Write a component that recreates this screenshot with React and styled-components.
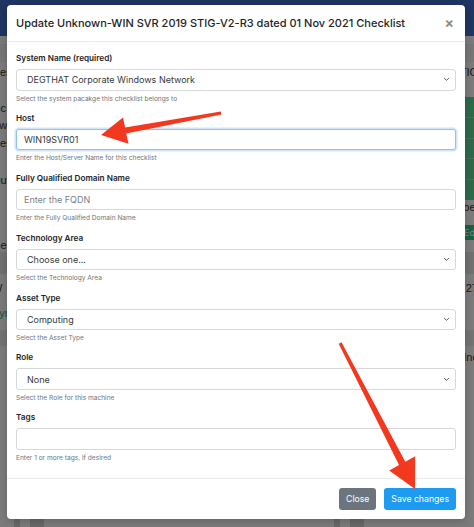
import React from "react";
import styled, { createGlobalStyle } from "styled-components";

const GlobalStyle = createGlobalStyle`
    html, body {
        margin: 0;
        padding: 0;
        width: 474px;
        height: 527px;
        overflow: hidden;
    }
    body {
        font-family: Inter, "Liberation Sans", sans-serif;
        color: #212529;
    }
`;

const fields = [
    {
        label: "System Name (required)",
        kind: "select",
        value: "DEGTHAT Corporate Windows Network",
        help: "Select the system pacakge this checklist belongs to",
    },
    {
        label: "Host",
        kind: "input",
        value: "WIN19SVR01",
        help: "Enter the Host/Server Name for this checklist",
        focused: true,
    },
    {
        label: "Fully Qualified Domain Name",
        kind: "input",
        placeholder: "Enter the FQDN",
        help: "Enter the Fully Qualified Domain Name",
    },
    {
        label: "Technology Area",
        kind: "select",
        value: "Choose one...",
        help: "Select the Technology Area",
    },
    {
        label: "Asset Type",
        kind: "select",
        value: "Computing",
        help: "Select the Asset Type",
    },
    {
        label: "Role",
        kind: "select",
        value: "None",
        help: "Select the Role for this machine",
    },
    {
        label: "Tags",
        kind: "input",
        value: "",
        help: "Enter 1 or more tags, if desired",
    },
];

// page rows sitting behind the backdrop, only slivers show at the edges
const pageRows = [
    { top: 64, left: "Desa", right: "STIG" },
    { top: 100, left: "Lic C", right: "" },
    { top: 117, left: "Sw", right: "" },
    { top: 135, left: "Desa", right: "" },
    { top: 172, left: "Outh", right: "" },
    { top: 199, left: "", right: "Label" },
    { top: 237, left: "Geo", right: "" },
    { top: 280, left: "W", right: "27" },
    { top: 305, left: "Sync", right: "", link: true },
    { top: 349, left: "", right: "Inc" },
];

export default function App() {
    return (
        <>
            <GlobalStyle />
            <Page>
                <Navbar />
                <Band $top={44} $h={18} $shade='#ededed' />
                <Band $top={252} $h={22} $shade='#e2e2e2' />
                <Band $top={330} $h={16} $shade='#e6e6e6' />
                {pageRows.map((row) => (
                    <PageRow key={row.top} style={{ top: row.top }}>
                        <PageText $link={row.link}>{row.left}</PageText>
                        <PageText>{row.right}</PageText>
                    </PageRow>
                ))}
                <GreenTable>
                    <GreenRow />
                    <GreenRow />
                    <GreenRow />
                    <GreenRow />
                </GreenTable>
                <GreenButton>Edit</GreenButton>
                <Columns>
                    <Col $w={6} $ml={14} />
                    <Col $w={14} $ml={10} />
                    <Col $w={6} $ml={290} />
                    <Col $w={14} $ml={10} />
                </Columns>
            </Page>
            <Backdrop />
            <Modal>
                <Header>
                    <Title>
                        Update Unknown-WIN SVR 2019 STIG-V2-R3 dated 01 Nov
                        2021 Checklist
                    </Title>
                    <CloseX>×</CloseX>
                </Header>
                <Body>
                    {fields.map((f) => (
                        <Group key={f.label}>
                            <Label>{f.label}</Label>
                            {f.kind === "select" ? (
                                <SelectBox>
                                    <span>{f.value}</span>
                                    <Chevron />
                                </SelectBox>
                            ) : (
                                <InputBox $focused={f.focused}>
                                    {f.value ? (
                                        f.value
                                    ) : (
                                        <Placeholder>
                                            {f.placeholder}
                                        </Placeholder>
                                    )}
                                </InputBox>
                            )}
                            <Help>{f.help}</Help>
                        </Group>
                    ))}
                </Body>
                <Footer>
                    <Button $variant='secondary'>Close</Button>
                    <Button $variant='primary'>Save changes</Button>
                </Footer>
            </Modal>
            <Arrows />
        </>
    );
}

function Chevron() {
    return (
        <svg width='7' height='5' viewBox='0 0 7 5'>
            <path
                d='M1.4 1.3 L3.5 3.4 L5.6 1.3'
                fill='none'
                stroke='#555'
                strokeWidth='1'
                strokeLinecap='round'
                strokeLinejoin='round'
            />
        </svg>
    );
}

function Arrows() {
    return (
        <ArrowLayer viewBox='0 0 474 527'>
            <polygon
                fill='#f2391f'
                points='101,135 128.5,143.8 126.2,133.6 221.4,114.6 220.8,111.4 125.1,127.4 123,117.4'
            />
            <polygon
                fill='#f2391f'
                points='415,489 389.2,470.4 399,465 338.7,343.7 341.5,342.3 405.3,461.8 415.2,456.3'
            />
        </ArrowLayer>
    );
}

const Page = styled.div`
    position: absolute;
    inset: 0;
    background: #f6f6f6;
    overflow: hidden;
`;

const Navbar = styled.div`
    height: 36px;
    background: #3f6bc4;
`;

const PageRow = styled.div`
    position: absolute;
    left: 0;
    right: 0;
    display: flex;
    justify-content: space-between;
    align-items: center;
    height: 16px;
    font-family: "Liberation Sans", sans-serif;
    font-size: 11px;
`;

const PageText = styled.span`
    color: ${(p) => (p.$link ? "#2fa86a" : "#333")};
    margin-left: -8px;
    margin-right: -4px;
`;

const GreenTable = styled.div`
    position: absolute;
    right: 0;
    top: 97px;
    width: 12px;
    height: 103px;
    background: #58d496;
    display: flex;
    flex-direction: column;
    justify-content: space-evenly;
`;

const GreenRow = styled.div`
    height: 1px;
    background: #86e4b5;
`;

const GreenButton = styled.div`
    position: absolute;
    right: 0;
    top: 225px;
    width: 10px;
    height: 15px;
    background: #3bbf86;
    color: #fff;
    font-size: 9px;
    line-height: 15px;
    padding-left: 3px;
`;

const Band = styled.div`
    position: absolute;
    left: 0;
    right: 0;
    top: ${(p) => p.$top}px;
    height: ${(p) => p.$h}px;
    background: ${(p) => p.$shade};
`;

const Columns = styled.div`
    position: absolute;
    left: 0;
    right: 0;
    bottom: 0;
    height: 12px;
    display: flex;
`;

const Col = styled.div`
    width: ${(p) => p.$w}px;
    margin-left: ${(p) => p.$ml}px;
    background: #d0d0d0;
`;

const Backdrop = styled.div`
    position: absolute;
    inset: 0;
    background: rgba(0, 0, 0, 0.5);
`;

const Modal = styled.div`
    position: absolute;
    left: 7px;
    top: 5px;
    width: 458px;
    height: 514px;
    background: #fff;
    border-radius: 4px;
    display: flex;
    flex-direction: column;
    box-shadow: 0 2px 8px rgba(0, 0, 0, 0.2);
`;

const Header = styled.div`
    height: 36px;
    display: flex;
    align-items: center;
    justify-content: space-between;
    padding: 0 11px 0 9px;
    border-bottom: 1px solid #e9ecef;
`;

const Title = styled.h5`
    margin: 0;
    font-size: 11px;
    font-weight: 500;
    color: #212529;
    white-space: nowrap;
`;

const CloseX = styled.span`
    font-size: 14px;
    font-weight: 700;
    color: #000;
    opacity: 0.45;
    line-height: 1;
`;

const Body = styled.div`
    flex: 1;
    padding: 9px 9px 0;
`;

const Group = styled.div`
    margin-bottom: 7.4px;
`;

const Label = styled.label`
    display: block;
    height: 14px;
    line-height: 14px;
    margin-bottom: 4px;
    font-size: 8.2px;
    font-weight: 600;
    color: #212529;
`;

const controlBase = `
    box-sizing: border-box;
    height: 21.5px;
    border-radius: 3px;
    background: #fff;
    display: flex;
    align-items: center;
    font-size: 9px;
    color: #343a40;
`;

const SelectBox = styled.div`
    ${controlBase}
    border: 1px solid #d6d9dc;
    padding: 0 5px 0 10px;
    justify-content: space-between;
`;

const InputBox = styled.div`
    ${controlBase}
    padding: 0 7px;
    border: 1px solid ${(p) => (p.$focused ? "#8ec2f5" : "#d6d9dc")};
    box-shadow: ${(p) =>
        p.$focused ? "0 0 0 1.5px rgba(120, 180, 240, 0.35)" : "none"};
`;

const Placeholder = styled.span`
    color: #7a8187;
`;

const Help = styled.small`
    display: block;
    margin-top: 3px;
    height: 10px;
    line-height: 10px;
    font-size: 6.6px;
    color: #6c757d;
`;

const Footer = styled.div`
    height: 40px;
    border-top: 1px solid #e9ecef;
    display: flex;
    align-items: center;
    justify-content: flex-end;
    gap: 8px;
    padding: 0 9px;
`;

const Button = styled.button`
    height: 22px;
    border: none;
    border-radius: 3px;
    padding: 0 7px;
    font-family: Inter, "Liberation Sans", sans-serif;
    font-size: 8.7px;
    color: #fff;
    background: ${(p) =>
        p.$variant === "primary" ? "#1d9bf0" : "#6c757d"};
`;

const ArrowLayer = styled.svg`
    position: absolute;
    left: 0;
    top: 0;
    width: 474px;
    height: 527px;
    pointer-events: none;
`;
